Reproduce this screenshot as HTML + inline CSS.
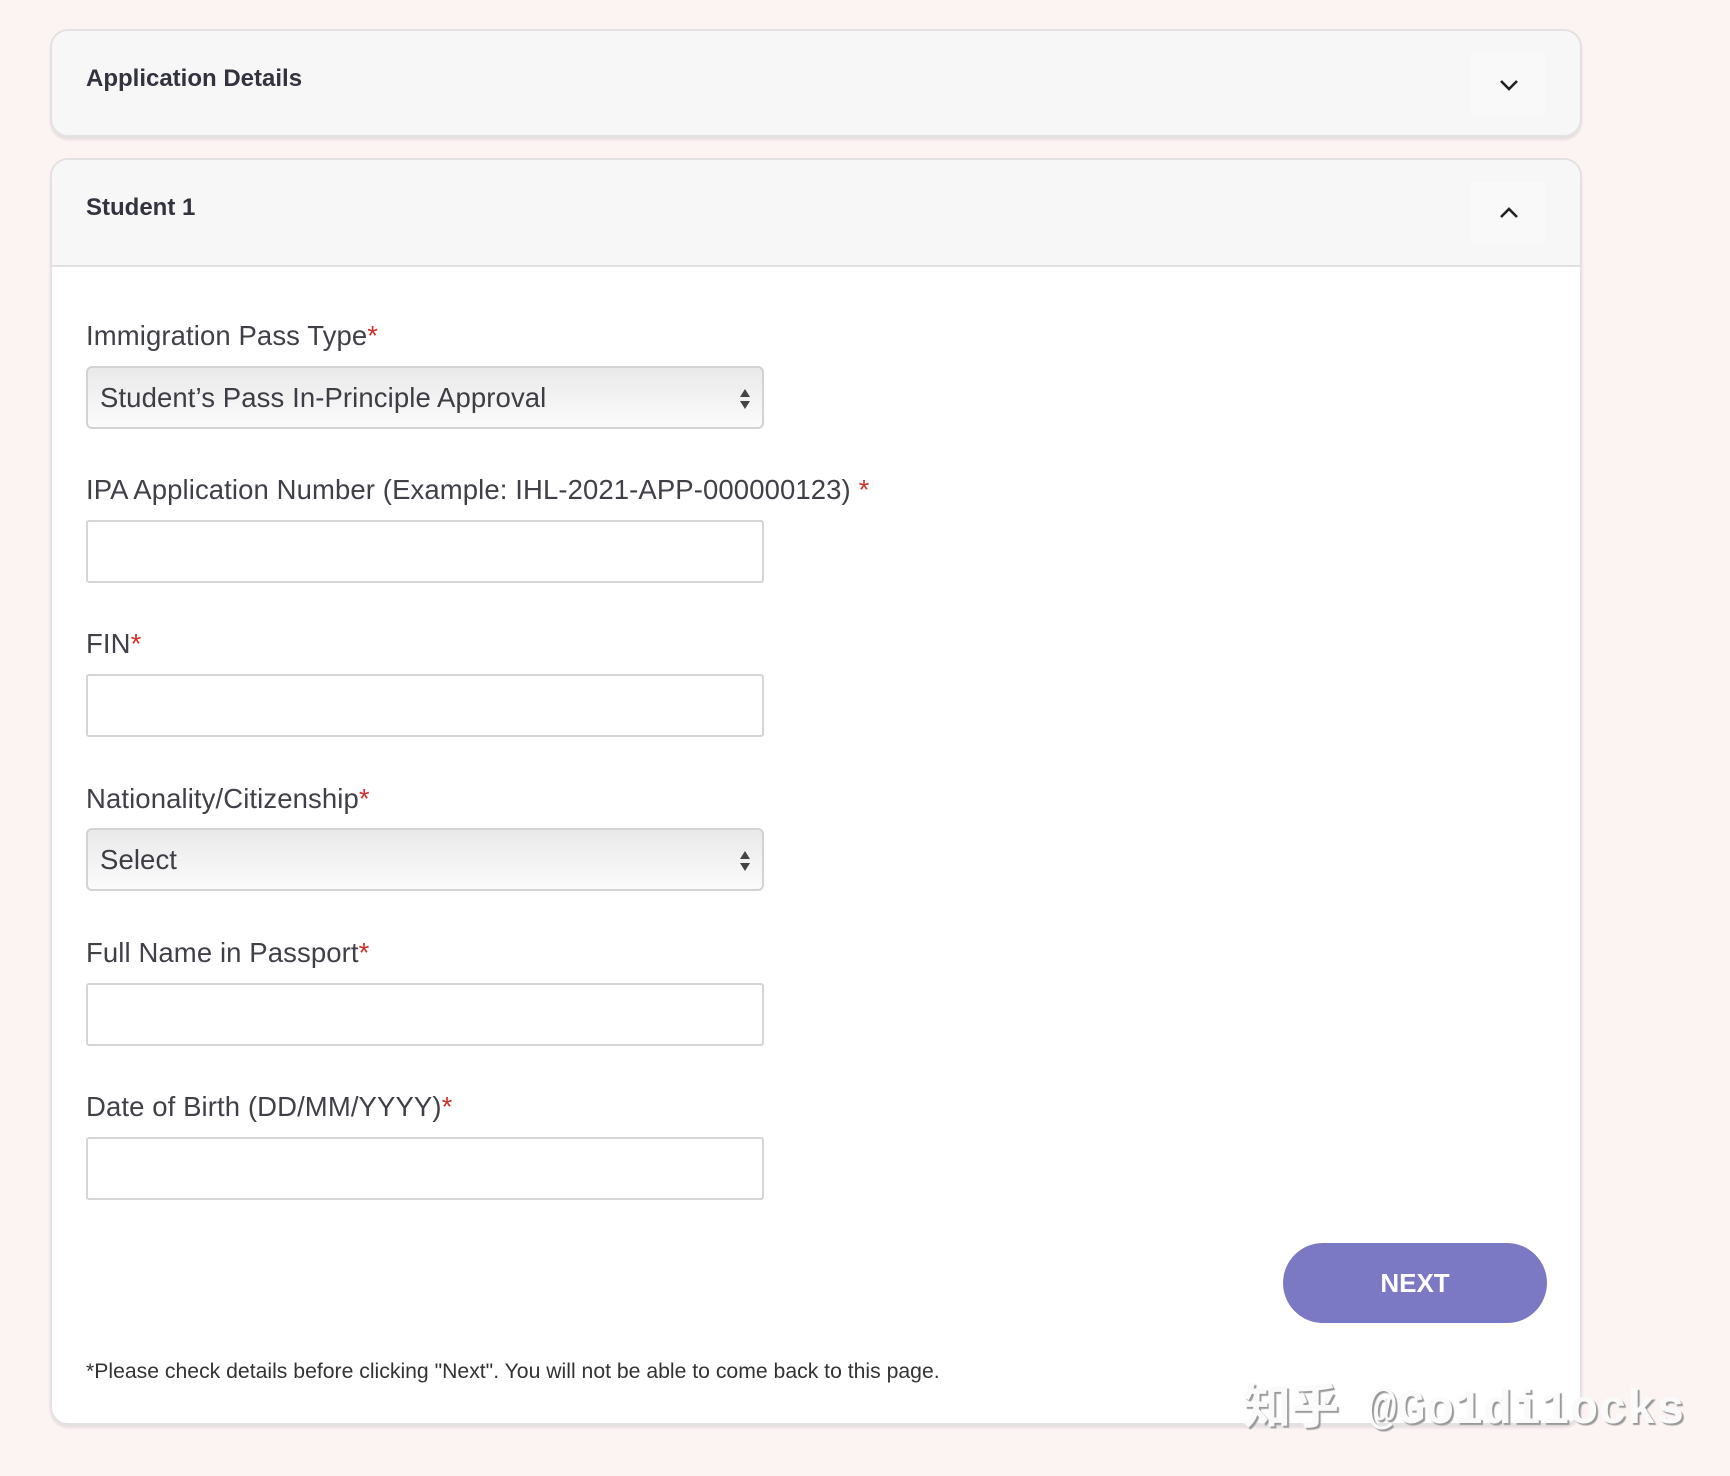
<!DOCTYPE html>
<html><head><meta charset="utf-8"><style>
*{box-sizing:border-box;margin:0;padding:0}
body{width:1730px;height:1476px;background:#fcf3f3;position:relative;overflow:hidden;font-family:"Liberation Sans",sans-serif;color:#3d3d47}
.card{position:absolute;left:50px;width:1532px;border:2px solid #e2e2e2;border-radius:18px;background:#f7f7f7;box-shadow:0 3px 2px rgba(0,0,0,0.08)}
.title{position:absolute;left:34px;font-weight:bold;font-size:24px;color:#333340}
.tbtn{position:absolute;left:1419px;width:74px;height:62px;background:#f9f9fa}
.chev{position:absolute;left:1447px;width:20px;height:12px}
.lbl{position:absolute;left:86px;font-size:27.5px;color:#404048;letter-spacing:0.1px}
.lbl b{color:#d0302a;font-weight:normal}
.inp{position:absolute;left:86px;width:678px;height:63px;border:2px solid #d5d5d5;border-radius:3px;background:#fff}
.sel{position:absolute;left:86px;width:678px;height:63px;border:2px solid #d3d3d3;border-radius:6px;background:linear-gradient(#e9e9e9,#fbfbfb);font-size:27.5px;color:#3d3d45;padding-left:12px;line-height:59px;letter-spacing:0.1px}
.arr{position:absolute;right:10px;top:18px;width:14px;height:26px}
</style></head><body>
<div class="card" style="top:29px;height:108px">
  <div class="title" style="top:34px">Application Details</div>
  <div class="tbtn" style="top:22px"></div>
  <svg class="chev" style="top:48px" viewBox="0 0 20 12"><path d="M2 2 L10 10 L18 2" fill="none" stroke="#222" stroke-width="2.6"/></svg>
</div>
<div class="card" style="top:158px;height:1267px;background:#fff">
  <div style="position:absolute;left:0;top:0;right:0;height:107px;background:#f7f7f7;border-bottom:2px solid #e0e0e0;border-radius:16px 16px 0 0"></div>
  <div class="title" style="top:34px">Student 1</div>
  <div class="tbtn" style="top:22px"></div>
  <svg class="chev" style="top:47px" viewBox="0 0 20 12"><path d="M2 10 L10 2 L18 10" fill="none" stroke="#222" stroke-width="2.6"/></svg>
</div>
<div class="lbl" style="top:320px">Immigration Pass Type<b>*</b></div>
<div class="sel" style="top:366px">Student’s Pass In-Principle Approval<svg class="arr" viewBox="0 0 14 26"><path d="M7 3 L12 11 L2 11Z M7 23 L12 15 L2 15Z" fill="#444"/></svg></div>
<div class="lbl" style="top:474px">IPA Application Number (Example: IHL-2021-APP-000000123) <b>*</b></div>
<div class="inp" style="top:520px"></div>
<div class="lbl" style="top:628px">FIN<b>*</b></div>
<div class="inp" style="top:674px"></div>
<div class="lbl" style="top:783px">Nationality/Citizenship<b>*</b></div>
<div class="sel" style="top:828px">Select<svg class="arr" viewBox="0 0 14 26"><path d="M7 3 L12 11 L2 11Z M7 23 L12 15 L2 15Z" fill="#444"/></svg></div>
<div class="lbl" style="top:937px">Full Name in Passport<b>*</b></div>
<div class="inp" style="top:983px"></div>
<div class="lbl" style="top:1091px">Date of Birth (DD/MM/YYYY)<b>*</b></div>
<div class="inp" style="top:1137px"></div>
<div style="position:absolute;left:1283px;top:1243px;width:264px;height:80px;border-radius:40px;background:#7b78c4;color:#fff;font-weight:bold;font-size:26px;text-align:center;line-height:80px">NEXT</div>
<div style="position:absolute;left:86px;top:1360px;font-size:21.2px;color:#333;letter-spacing:0px">*Please check details before clicking "Next". You will not be able to come back to this page.</div>
<div style="position:absolute;left:1243px;top:1367px;font-family:'Liberation Mono','Noto Sans CJK SC',monospace;font-size:48px;font-weight:bold;color:#fafafa;text-shadow:2px 2px 1px #999;white-space:nowrap">知乎 @Go1di1ocks</div>
</body></html>
